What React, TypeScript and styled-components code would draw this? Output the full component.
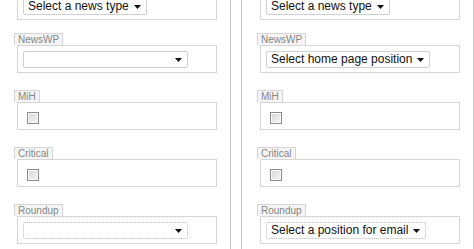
import React from 'react'
import styled, { createGlobalStyle } from 'styled-components'

const GlobalStyle = createGlobalStyle`
  html, body {
    margin: 0;
    padding: 0;
    background: #fff;
    overflow: hidden;
  }
  body {
    font-family: "Liberation Sans", Arial, sans-serif;
  }
`

const Page = styled.div`
  display: flex;
  gap: 10px;
  margin: -20px 0 0 -2px;
  height: 290px;
`

const Panel = styled.div`
  width: 233px;
  flex: none;
  box-sizing: border-box;
  border-left: 1px solid #cacaca;
  border-right: 1px solid #cacaca;
  padding: 0 13px 0 18px;
  display: flex;
  flex-direction: column;
  gap: 17px;
`

const Group = styled.div<{ $tight?: boolean }>`
  display: flex;
  flex-direction: column;
  align-items: flex-start;
  margin-bottom: ${p => (p.$tight ? '-4px' : '0')};
`

const Tab = styled.div`
  height: 12px;
  box-sizing: border-box;
  margin-left: -3px;
  padding: 0 3px;
  border: 1px solid #d4d4d4;
  border-bottom: none;
  background: #f5f5f5;
  color: #858585;
  font-size: 10px;
  line-height: 12px;
`

const Box = styled.div<{ $check?: boolean }>`
  width: 200px;
  height: 28px;
  box-sizing: border-box;
  border: 1px solid #d6d6d6;
  padding: ${p => (p.$check ? '9px 9px' : '5px 5px')};
  display: flex;
  align-items: flex-start;
`

const Select = styled.div<{ $width?: number; $dotted?: boolean }>`
  display: inline-flex;
  align-items: center;
  justify-content: space-between;
  gap: 5px;
  height: 17px;
  box-sizing: border-box;
  width: ${p => (p.$width ? `${p.$width}px` : 'auto')};
  padding: 0 5px 0 4px;
  border: 1px ${p => (p.$dotted ? 'dotted #b8b8b8' : 'solid #d0d0d0')};
  border-radius: 2px;
  background: #fff;
  color: #111;
  font-size: 12px;
  line-height: 15px;
  white-space: nowrap;
`

const Arrow = styled.svg`
  flex: none;
  margin-left: auto;
`

const Check = styled.span`
  display: block;
  width: 12px;
  height: 12px;
  box-sizing: border-box;
  border: 1px solid #8c8c8c;
  background: linear-gradient(135deg, #d6d6d6, #f6f6f6);
  box-shadow: inset 0 0 0 1px #fafafa;
`

type Field =
  | { label: string; kind: 'select'; text?: string; width?: number; dotted?: boolean }
  | { label: string; kind: 'check' }

const Caret = () => (
  <Arrow width="7" height="4" viewBox="0 0 7 4">
    <path d="M0 0H7L3.5 4Z" fill="#111" />
  </Arrow>
)

const renderField = (field: Field, index: number) => (
  <Group key={field.label} $tight={index === 0}>
    <Tab>{field.label}</Tab>
    {field.kind === 'check' ? (
      <Box $check>
        <Check />
      </Box>
    ) : (
      <Box>
        <Select $width={field.width} $dotted={field.dotted}>
          {field.text && <span>{field.text}</span>}
          <Caret />
        </Select>
      </Box>
    )}
  </Group>
)

const leftFields: Field[] = [
  { label: 'Type', kind: 'select', text: 'Select a news type' },
  { label: 'NewsWP', kind: 'select', width: 165 },
  { label: 'MiH', kind: 'check' },
  { label: 'Critical', kind: 'check' },
  { label: 'Roundup', kind: 'select', width: 165, dotted: true },
]

const rightFields: Field[] = [
  { label: 'Type', kind: 'select', text: 'Select a news type' },
  { label: 'NewsWP', kind: 'select', text: 'Select home page position' },
  { label: 'MiH', kind: 'check' },
  { label: 'Critical', kind: 'check' },
  { label: 'Roundup', kind: 'select', text: 'Select a position for email', dotted: true },
]

const App = () => (
  <>
    <GlobalStyle />
    <Page>
      <Panel>{leftFields.map(renderField)}</Panel>
      <Panel>{rightFields.map(renderField)}</Panel>
    </Page>
  </>
)

export default App
